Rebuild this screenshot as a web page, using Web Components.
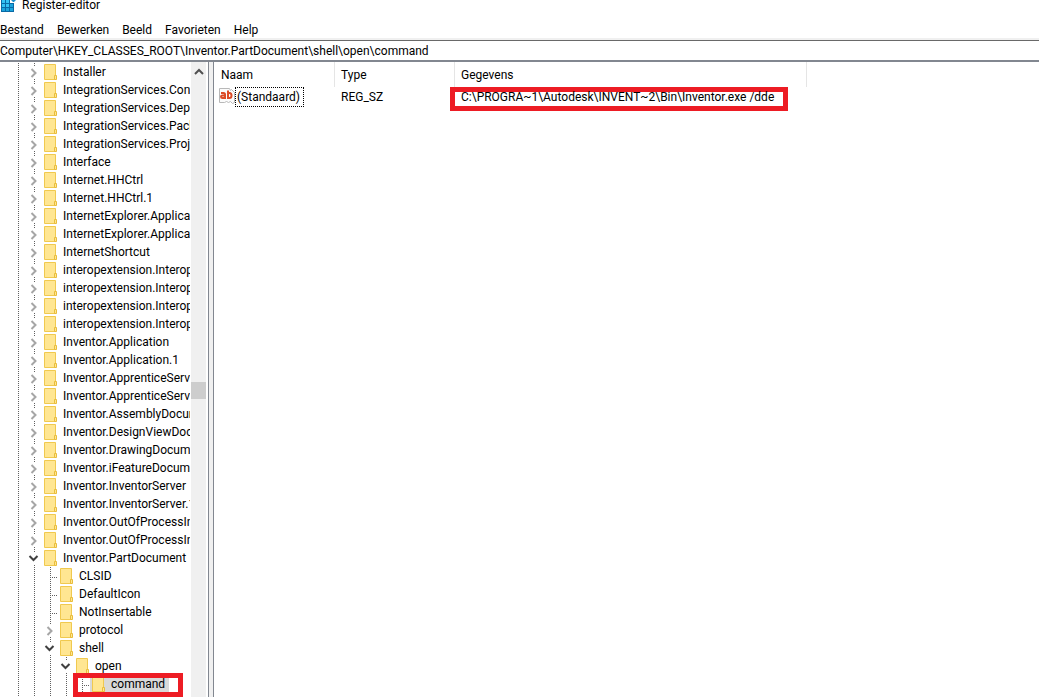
<!DOCTYPE html>
<html lang="nl">
    <head>
        <meta charset="utf-8">
        <title>Register-editor</title>
        <style>
            html, body {
                height: 100%;
            }
            body {
                margin: 0;
                overflow: hidden;
                background: white;
                color: black;
                font: 12px/18px Roboto, "Open Sans", sans-serif;
            }
        </style>
    </head>

    <body>

        <reg-window>
            <reg-titlebar slot="title">Register-editor</reg-titlebar>
            <reg-menu slot="menu" items="Bestand, Bewerken, Beeld, Favorieten, Help"></reg-menu>
            <reg-address slot="address" path="Computer\HKEY_CLASSES_ROOT\Inventor.PartDocument\shell\open\command"></reg-address>
            <reg-tree slot="tree"></reg-tree>
            <reg-values slot="values"></reg-values>
        </reg-window>

        <!-- - - - - - - - - - - - - - - - - - - - - - - - - -->

        <template id="reg-window-template">
            <style>
                :host {
                    display: flex;
                    flex-direction: column;
                    height: 100%;
                }
                .panes {
                    flex: 1;
                    min-height: 0;
                    display: grid;
                    grid-template-columns: 208px 6px 1fr;
                }
                .splitter {
                    box-sizing: border-box;
                    background: #f0f0f0;
                    border-left: 1px solid #828790;
                    border-right: 1px solid #828790;
                    cursor: col-resize;
                }
                ::slotted(*) {
                    min-width: 0;
                    min-height: 0;
                }
            </style>
            <slot name="title"></slot>
            <slot name="menu"></slot>
            <slot name="address"></slot>
            <div class="panes">
                <slot name="tree"></slot>
                <div class="splitter"></div>
                <slot name="values"></slot>
            </div>
        </template>

        <template id="reg-titlebar-template">
            <style>
                :host {
                    display: flex;
                    align-items: flex-start;
                    gap: 6px;
                    height: 20px;
                }
                svg {
                    width: 16px;
                    height: 13px;
                }
                span {
                    line-height: 11px;
                }
            </style>
            <svg viewBox="0 0 16 13">
                <path d="M1 0h13v12H1z" fill="#0a6aa6"/>
                <path d="M2 0h3v3H2zM6 0h3v3H6zM2 4h3v3H2zM6 4h3v3H6z" fill="#35c3f3"/>
                <path d="M2 8h3v3H2zM6 8h3v3H6zM10 4h3v3h-3zM10 8h3v3h-3z" fill="#1ca4dc"/>
                <path d="M10 0h6v3h-6z" fill="white"/>
                <path d="M11 0h5l-2 2h-1z" fill="#1c8fc9"/>
            </svg>
            <span><slot></slot></span>
        </template>

        <template id="reg-menu-template">
            <style>
                :host {
                    display: flex;
                    gap: 13px;
                    height: 18px;
                    border-bottom: 2px solid #f0f0f0;
                }
                button {
                    padding: 0;
                    border: none;
                    background: none;
                    color: inherit;
                    font: inherit;
                    line-height: 20px;
                }
            </style>
        </template>

        <template id="reg-address-template">
            <style>
                :host {
                    display: block;
                    border-top: 1px solid #696969;
                    border-bottom: 2px solid #828790;
                }
                input {
                    display: block;
                    box-sizing: border-box;
                    width: 100%;
                    height: 19px;
                    padding: 0;
                    border: none;
                    outline: none;
                    background: white;
                    color: inherit;
                    font: inherit;
                }
            </style>
            <input type="text" aria-label="Adres" spellcheck="false">
        </template>

        <template id="reg-tree-template">
            <style>
                :host {
                    display: grid;
                    grid-template-columns: 1fr 15px;
                    gap: 1px;
                    padding-right: 2px;
                    overflow: hidden;
                }
                .keys {
                    overflow: hidden;
                    padding: 1px 0 0 10px;
                }
                .scrollbar {
                    display: flex;
                    flex-direction: column;
                    background: #f0f0f0;
                }
                .scrollbar svg {
                    height: 20px;
                    fill: none;
                    stroke: #505050;
                    stroke-width: 2;
                }
                .before {
                    flex: 300;
                }
                .thumb {
                    height: 17px;
                    background: #cdcdcd;
                }
                .after {
                    flex: 298;
                }
            </style>
            <div class="keys" role="tree" aria-label="Sleutels"></div>
            <div class="scrollbar">
                <svg viewBox="0 0 15 20"><path d="M4 12l4-4 4 4"/></svg>
                <div class="before"></div>
                <div class="thumb"></div>
                <div class="after"></div>
            </div>
        </template>

        <template id="reg-key-template">
            <style>
                :host {
                    display: flex;
                    position: relative;
                    height: 18px;
                    white-space: nowrap;
                }
                svg {
                    flex: none;
                    height: 18px;
                    width: 16px;
                    fill: none;
                }
                .line {
                    stroke: #606060;
                    stroke-dasharray: 1 1;
                }
                .closed {
                    stroke: #a6a6a6;
                    stroke-width: 2;
                }
                .open {
                    stroke: #404040;
                    stroke-width: 2;
                }
                .label {
                    padding: 0 4px 0 5px;
                }
                :host([selected]) .key {
                    background: #d9d9d9;
                }
                :host([state="line"]) .key {
                    display: none;
                }
                .key {
                    display: flex;
                }
                .mark {
                    display: none;
                }
                :host([selected]) .mark {
                    display: block;
                    position: absolute;
                    z-index: 1;
                    top: -2px;
                    left: 63px;
                    box-sizing: border-box;
                    width: 110px;
                    height: 24px;
                    border: 5px solid #ed1c24;
                }
            </style>
            <div class="key">
                <svg class="folder" viewBox="0 0 16 18">
                    <path d="M2.500 1.500h11v15h-11z" fill="#ffe692" stroke="#f0c94f"/>
                    <path d="M12.500 12.500h2v4h-2z" fill="#ffe692" stroke="#e9bd3c"/>
                </svg>
                <span class="label"><slot></slot></span>
            </div>
            <div class="mark"></div>
        </template>

        <template id="reg-values-template">
            <style>
                :host {
                    display: block;
                    overflow: hidden;
                }
                table {
                    table-layout: fixed;
                    width: 593px;
                    border-collapse: separate;
                    border-spacing: 0;
                }
                col.short {
                    width: 120px;
                }
                col.first {
                    width: 121px;
                }
                th {
                    box-sizing: border-box;
                    height: 25px;
                    padding: 0 0 0 6px;
                    border-right: 1px solid #e5e5e5;
                    font-weight: normal;
                    text-align: left;
                }
                th:first-child {
                    padding-left: 7px;
                }
                td {
                    position: relative;
                    height: 18px;
                    padding: 0 0 0 6px;
                    white-space: nowrap;
                }
                .name {
                    display: flex;
                }
                td:first-child {
                    padding-left: 5px;
                }
                svg {
                    width: 16px;
                    height: 18px;
                }
                .focus {
                    padding: 0 3px 0 1px;
                    border: 1px dotted black;
                    line-height: 18px;
                }
                .mark {
                    position: absolute;
                    top: 0;
                    left: -5px;
                    box-sizing: border-box;
                    width: 338px;
                    height: 24px;
                    border: 5px solid #ed1c24;
                }
                .data {
                    position: relative;
                    z-index: 1;
                }
            </style>
            <table>
                <colgroup>
                    <col class="first"><col class="short"><col>
                </colgroup>
                <thead>
                    <tr><th>Naam</th><th>Type</th><th>Gegevens</th></tr>
                </thead>
                <tbody>
                    <tr>
                        <td>
                            <div class="name">
                                <svg viewBox="0 0 16 18">
                                    <path d="M.5 1.500h10l1 2 1-1 3 3v10l-2 1-2-2-2 1-2-1-2 1H.5z" fill="#fbfbfb" stroke="#b8b8b8"/>
                                    <g fill="none" stroke="#dc4a25" stroke-width="2">
                                        <path d="M2 6h2.500q1.500 0 1.500 1.500V12M6 11H3.500Q2 11 2 9.800T3.500 8.600H6"/>
                                        <path d="M9 3.500V12M9 11h1.500q2 0 2-2.500t-2-2.500H9"/>
                                    </g>
                                </svg>
                                <span class="focus">(Standaard)</span>
                            </div>
                        </td>
                        <td>REG_SZ</td>
                        <td>
                            <div class="mark"></div>
                            <span class="data">C:\PROGRA~1\Autodesk\INVENT~2\Bin\Inventor.exe /dde</span>
                        </td>
                    </tr>
                </tbody>
            </table>
        </template>

        <script>

            // attaches an open shadow root filled from the template named after the tag
            class RegElement extends HTMLElement {

                constructor() {
                    super()
                    var template = document.getElementById(this.localName + '-template')
                    this.shadow = this.attachShadow({mode: 'open'})
                    this.shadow.appendChild(template.content.cloneNode(true))
                }

            }

            class RegMenu extends RegElement {

                connectedCallback() {
                    this.getAttribute('items').split(',').forEach((item) => {
                        var button = document.createElement('button')
                        button.type = 'button'
                        button.textContent = item.trim()
                        this.shadow.appendChild(button)
                    })
                }

            }

            class RegAddress extends RegElement {

                connectedCallback() {
                    this.shadow.querySelector('input').value = this.getAttribute('path')
                }

            }

            // guide lines, one 16px cell for each level
            var guides = {
                line: '<path class="line" d="M8.500 0v18"/>',
                leaf: '<path class="line" d="M8.500 0v18M8 10.500h8"/>',
                closed: '<path class="line" d="M8.500 0v4M8.500 16v2"/><path class="closed" d="M5.500 6l4 4-4 4"/>',
                open: '<path class="line" d="M8.500 0v4M8.500 16v2"/><path class="open" d="M3.500 7l4 4 4-4"/>'
            }

            class RegKey extends RegElement {

                connectedCallback() {
                    var level = Number(this.getAttribute('level'))
                    var state = this.getAttribute('state')
                    var key = this.shadow.querySelector('.key')
                    for(var i = 0; i <= level; i++) {
                        var kind = i === level ? state : 'line'
                        key.insertAdjacentHTML('beforebegin', '<svg viewBox="0 0 16 18">' + guides[kind] + '</svg>')
                    }
                    this.setAttribute('role', 'treeitem')
                    this.setAttribute('aria-level', level)
                }

            }

            // label, level, state
            var keys = [
                'Installer', 'IntegrationServices.ConfigurationFile', 'IntegrationServices.DeploymentManifest',
                'IntegrationServices.PackageFile', 'IntegrationServices.ProjectFile', 'Interface',
                'Internet.HHCtrl', 'Internet.HHCtrl.1', 'InternetExplorer.Application',
                'InternetExplorer.Application.1', 'InternetShortcut', 'interopextension.InteropExtension',
                'interopextension.InteropExtension', 'interopextension.InteropExtension',
                'interopextension.InteropExtension', 'Inventor.Application', 'Inventor.Application.1',
                'Inventor.ApprenticeServer', 'Inventor.ApprenticeServer.1', 'Inventor.AssemblyDocument',
                'Inventor.DesignViewDocument', 'Inventor.DrawingDocument', 'Inventor.iFeatureDocument',
                'Inventor.InventorServer', 'Inventor.InventorServer.1', 'Inventor.OutOfProcessInventor',
                'Inventor.OutOfProcessInventor.1'
            ].map((label) => [label, 1, 'closed']).concat([
                ['Inventor.PartDocument', 1, 'open'],
                ['CLSID', 2, 'leaf'],
                ['DefaultIcon', 2, 'leaf'],
                ['NotInsertable', 2, 'leaf'],
                ['protocol', 2, 'closed'],
                ['shell', 2, 'open'],
                ['open', 3, 'open'],
                ['command', 4, 'leaf'],
                // guides running on below the last key
                ['', 3, 'line']
            ])

            class RegTree extends RegElement {

                connectedCallback() {
                    var container = this.shadow.querySelector('.keys')
                    keys.forEach(([label, level, state]) => {
                        var key = document.createElement('reg-key')
                        key.setAttribute('level', level)
                        key.setAttribute('state', state)
                        if(label === 'command')
                            key.setAttribute('selected', '')
                        key.textContent = label
                        container.appendChild(key)
                    })
                }

            }

            customElements.define('reg-window', class extends RegElement {})
            customElements.define('reg-titlebar', class extends RegElement {})
            customElements.define('reg-menu', RegMenu)
            customElements.define('reg-address', RegAddress)
            customElements.define('reg-key', RegKey)
            customElements.define('reg-tree', RegTree)
            customElements.define('reg-values', class extends RegElement {})

        </script>

    </body>
</html>
